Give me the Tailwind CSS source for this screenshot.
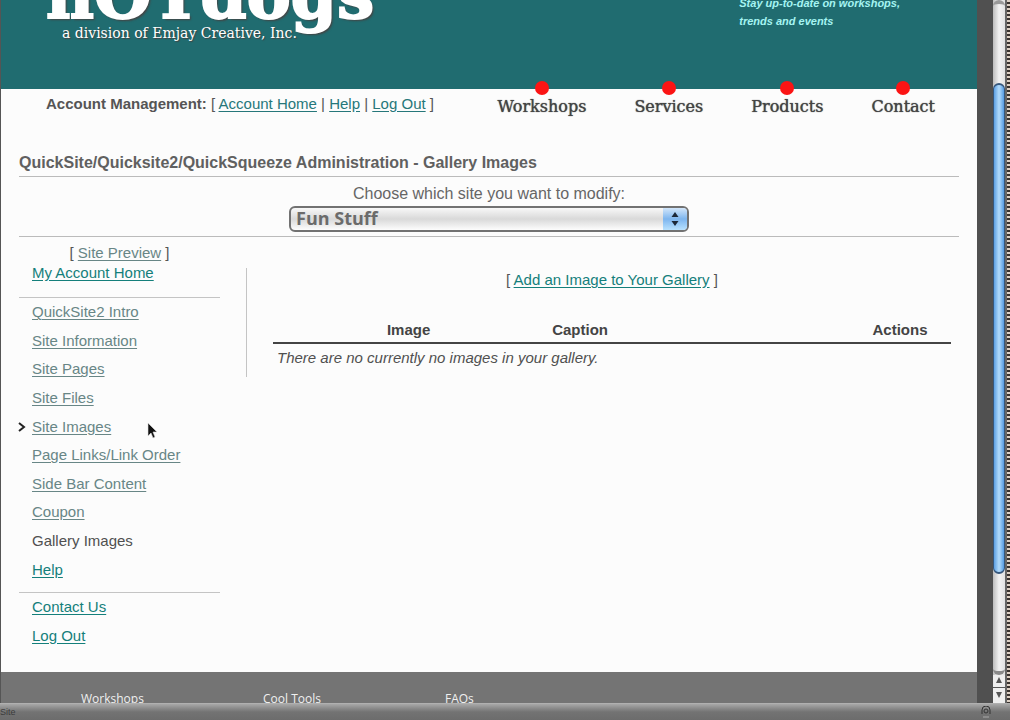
<!DOCTYPE html>
<html lang="en">
<head>
    <meta charset="UTF-8">
    <meta name="viewport" content="width=device-width, initial-scale=1.0">
    <title>hOTdogs - Gallery Images</title>
    <script src="https://cdn.jsdelivr.net/npm/@tailwindcss/browser@4"></script>
</head>
<body class="h-screen overflow-hidden flex flex-col bg-[#505050] font-['Liberation_Sans',Arial,sans-serif] text-[15px] leading-5 text-[#555]">
    <div class="flex flex-1 min-h-0">
        <div class="flex flex-col flex-1 min-w-0 overflow-hidden bg-[#fcfcfc] border-l border-[#555]">
            <!-- Header -->
            <header class="shrink-0 h-[89px] bg-[#206c70] overflow-hidden flex items-start justify-between pl-[45px] pr-[77px]">
                <div class="text-white font-['DejaVu_Serif',serif]">
                    <div class="text-[66px] leading-[66px] -mt-[38px] font-bold [-webkit-text-stroke:2px_white] [text-shadow:2px_2px_2px_#444]">hOTdogs</div>
                    <p class="pl-4 -mt-[5px] text-[14px] leading-5 [text-shadow:1px_1px_1px_#444]">a division of Emjay Creative, Inc.</p>
                </div>
                <p class="-mt-[6px] text-[11px] leading-[18px] italic font-bold text-[#a5f4f2]">Stay up-to-date on workshops,<br>trends and events</p>
            </header>

            <!-- Account links and main navigation -->
            <div class="shrink-0 flex justify-between pl-[45px] pr-[42px]">
                <p class="pt-[5px]"><b>Account Management:</b> [ <a href="#" class="text-[#26777a] underline underline-offset-2">Account Home</a> | <a href="#" class="text-[#26777a] underline underline-offset-2">Help</a> | <a href="#" class="text-[#26777a] underline underline-offset-2">Log Out</a> ]</p>
                <nav class="-mt-2 flex gap-12 font-['DejaVu_Serif',serif] text-[16px] text-[#444] [text-shadow:0_0_1px_#444]">
                    <a href="#" class="flex flex-col items-center gap-[2px]"><span class="size-[14px] rounded-full bg-[#fb1414]"></span>Workshops</a>
                    <a href="#" class="flex flex-col items-center gap-[2px]"><span class="size-[14px] rounded-full bg-[#fb1414]"></span>Services</a>
                    <a href="#" class="flex flex-col items-center gap-[2px]"><span class="size-[14px] rounded-full bg-[#fb1414]"></span>Products</a>
                    <a href="#" class="flex flex-col items-center gap-[2px]"><span class="size-[14px] rounded-full bg-[#fb1414]"></span>Contact</a>
                </nav>
            </div>

            <main class="shrink-0 h-[555px] px-[18px] pt-9">
                <h1 class="text-[16px] leading-5 font-bold text-[#606060] pb-[3px] border-b border-[#bbb]">QuickSite/Quicksite2/QuickSqueeze Administration - Gallery Images</h1>

                <!-- Site picker -->
                <form class="flex flex-col items-center pt-[7px] pb-1 border-b border-[#bbb]">
                    <label for="site" class="text-[16px] leading-5 text-[#666]">Choose which site you want to modify:</label>
                    <div class="relative mt-[2px] w-[400px]">
                        <select id="site" class="block w-full h-[26px] appearance-none rounded-md border-2 border-[#727272] pl-[5px] pb-[2px] font-['Open_Sans',sans-serif] font-bold text-[18px] leading-5 text-[#6b6b6b] bg-linear-to-b from-[#f8f8f8] via-[#d9d9d9] to-[#fdfdfd]">
                            <option>Fun Stuff</option>
                        </select>
                        <span class="pointer-events-none absolute right-[2px] inset-y-[2px] w-6 rounded-r bg-linear-to-b from-[#d2e6fa] via-[#7db5ee] to-[#b9e2ff] flex items-center justify-center">
                            <svg class="w-2 h-4" viewBox="0 0 8 16" fill="#1c2838"><path d="M4 1l3.5 5h-7zM4 15l3.5-5h-7z"/></svg>
                        </span>
                    </div>
                </form>

                <div class="flex pt-[6px]">
                    <!-- Side menu -->
                    <aside class="w-[201px] shrink-0">
                        <p class="text-center">[ <a href="#" class="text-[#688686] underline underline-offset-2">Site Preview</a> ]</p>
                        <p class="pl-[13px] pb-[14px] border-b border-[#c4c4c4]"><a href="#" class="text-[#147f7b] underline underline-offset-2">My Account Home</a></p>
                        <ul class="grid grid-rows-10 h-[286px] items-center pl-[13px] text-[#688686]">
                            <li><a href="#" class="underline underline-offset-2">QuickSite2 Intro</a></li>
                            <li><a href="#" class="underline underline-offset-2">Site Information</a></li>
                            <li><a href="#" class="underline underline-offset-2">Site Pages</a></li>
                            <li><a href="#" class="underline underline-offset-2">Site Files</a></li>
                            <li class="relative">
                                <svg class="absolute -left-[14px] top-[5px] w-2 h-[10px]" viewBox="0 0 8 10" fill="none" stroke="#222" stroke-width="2"><path d="M1 1l5 4-5 4"/></svg>
                                <a href="#" class="underline underline-offset-2">Site Images</a>
                            </li>
                            <li><a href="#" class="underline underline-offset-2">Page Links/Link Order</a></li>
                            <li><a href="#" class="underline underline-offset-2">Side Bar Content</a></li>
                            <li><a href="#" class="underline underline-offset-2">Coupon</a></li>
                            <li class="text-[#505050]">Gallery Images</li>
                            <li><a href="#" class="text-[#147f7b] underline underline-offset-2">Help</a></li>
                        </ul>
                        <ul class="grid grid-rows-2 h-[58px] items-center mt-2 pl-[13px] border-t border-[#c4c4c4] text-[#147f7b]">
                            <li><a href="#" class="underline underline-offset-2">Contact Us</a></li>
                            <li><a href="#" class="underline underline-offset-2">Log Out</a></li>
                        </ul>
                    </aside>

                    <!-- Gallery -->
                    <section class="flex-1 h-[109px] mt-[25px] ml-[26px] mr-2 pl-[26px] border-l border-[#c4c4c4]">
                        <p class="text-center pt-[2px]">[ <a href="#" class="text-[#147f7b] underline underline-offset-2">Add an Image to Your Gallery</a> ]</p>
                        <table class="w-full mt-[30px] table-fixed text-[#444]">
                            <thead>
                                <tr class="border-b-2 border-[#444]">
                                    <th class="w-2/5 pb-[2px]">Image</th>
                                    <th class="pb-[2px] text-left pl-2">Caption</th>
                                    <th class="w-[102px] pb-[2px]">Actions</th>
                                </tr>
                            </thead>
                            <tbody>
                                <tr><td colspan="3" class="italic pl-1 pt-1 text-[#505050]">There are no currently no images in your gallery.</td></tr>
                            </tbody>
                        </table>
                    </section>
                </div>
            </main>

            <footer class="flex-1 bg-[#747474] text-[#f0f0f0] font-['Open_Sans',sans-serif] text-[12px] flex pl-20 pt-[17px]">
                <a href="#" class="w-[182px]">Workshops</a>
                <a href="#" class="w-[182px]">Cool Tools</a>
                <a href="#">FAQs</a>
            </footer>
        </div>

        <!-- Scroll bar -->
        <div class="w-4 shrink-0 bg-[#505050]"></div>
        <div class="w-3 shrink-0 flex flex-col bg-linear-to-r from-[#bdbdbd] via-[#f2f2f2] to-[#e2e2e2]">
            <div class="h-[83px] border-t-4 border-[#999] rounded-t-lg"></div>
            <div class="h-[491px] rounded-full border-y-2 border-x border-[#36577c] bg-linear-to-r from-[#5b9fe2] via-[#b3dcfb] to-[#549be2]"></div>
            <div class="flex-1 border-b-4 border-[#8a8a8a] rounded-b-full"></div>
            <svg class="w-3 h-7" viewBox="0 0 12 28" fill="#555"><path fill="#eee" d="M0 0h12v28H0z"/><path d="M6 2l3 6H3zM6 23l3-6H3zM0 12h12v1H0z"/></svg>
        </div>
        <div class="w-[5px] shrink-0 border-l-2 border-[#666] bg-[repeating-linear-gradient(#ddd0c4_0_2px,#39322e_2px_4px)]"></div>
    </div>

    <!-- Status bar -->
    <div class="h-[17px] shrink-0 flex items-center justify-between pr-[18px] border-t border-[#b0b0b0] bg-linear-to-b from-[#a8a8a8] via-[#737373] to-[#6c6c6c] text-[9px] leading-4 text-[#3c3c3c]">
        <span>Site</span>
        <svg class="w-3 h-3" viewBox="0 0 12 12" fill="none" stroke="#333"><path d="M2 8V4a3 3 0 0 1 8 0v4"/><circle cx="6" cy="5" r="2"/><path stroke="#aaa" d="M3 11h6"/></svg>
    </div>

    <!-- Pointer -->
    <svg class="absolute left-[147px] top-[422px] w-[11px] h-[17px]" viewBox="0 0 11 17"><path d="M1 1v13l3-3 2 5 2-1-2-5h4z" fill="#111" stroke="#ddd" stroke-width=".6"/></svg>
</body>
</html>
